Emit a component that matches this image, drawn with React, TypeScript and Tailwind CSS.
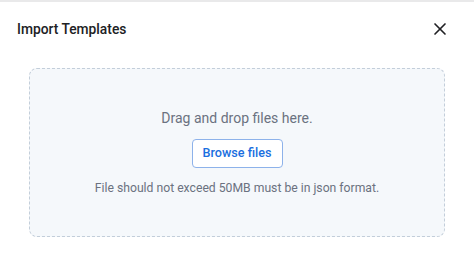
import { X } from 'lucide-react';

export default function App() {
  return (
    <div className="relative h-[264px] w-[474px] overflow-hidden bg-white font-['Roboto',sans-serif]">
      {/* faint strip of the page behind the dialog */}
      <div className="h-[2px] w-full bg-[#e9e9ea]" />
      <div className="flex items-center justify-between pl-[17px] pr-[24px] pt-[17px]">
        <h2 className="text-[13.8px] font-medium leading-[20px] text-[#202124]">Import Templates</h2>
        <button className="flex h-5 w-5 items-center justify-center text-[#202124]">
          <X size={20} strokeWidth={2} />
        </button>
      </div>
      <div className="mx-[29px] mt-[29px] flex h-[169px] flex-col items-center rounded-[8px] border border-dashed border-[#c3ceda] bg-[#f5f8fb] pt-[39px]">
        <p className="text-[14px] leading-[20px] text-[#6b7280]">Drag and drop files here.</p>
        <button className="mt-[11px] h-[29px] w-[91px] rounded-[4px] border border-[#8db2ea] bg-white text-[12.6px] font-medium text-[#1a6fe0]">
          Browse files
        </button>
        <p className="mt-[11px] text-[12.2px] leading-[18px] text-[#6b7280]">
          File should not exceed 50MB must be in json format.
        </p>
      </div>
    </div>
  );
}
